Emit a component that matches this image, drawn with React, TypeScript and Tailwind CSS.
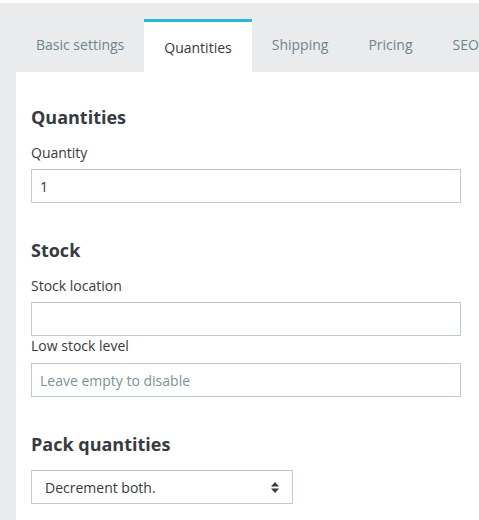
import React from 'react';

const tabs = ['Basic settings', 'Quantities', 'Shipping', 'Pricing', 'SEO'];

const inputCls =
  'block w-full h-[34px] border border-[#bbcdd2] bg-white px-[8px] text-[14px] text-[#363a41] placeholder-[#7a9299] outline-none';

const App: React.FC = () => {
  return (
    <div className="w-[479px] h-[520px] overflow-hidden bg-white font-['Open_Sans',sans-serif] text-[#363a41]">
      <div className="mt-[3px] h-[517px] bg-[#eaebed] pl-[16px]">
        <div className="flex pt-[16px] whitespace-nowrap">
          {tabs.map((t) =>
            t === 'Quantities' ? (
              <div key={t} className="h-[53px] border-t-[3px] border-[#25b9d7] bg-white px-[20px] pt-[16px] text-[14px] leading-[20px] text-[#363a41]">
                {t}
              </div>
            ) : (
              <div key={t} className="h-[53px] px-[20px] pt-[16px] text-[14px] leading-[20px] text-[#6c868e]">
                {t}
              </div>
            )
          )}
        </div>

        <div className="bg-white pl-[15px] pr-[18px] pt-[33px] h-[460px]">
          <h2 className="text-[18px] font-bold leading-[24px]">Quantities</h2>
          <label className="block mt-[14px] text-[14px] leading-[20px]">Quantity</label>
          <input className={`${inputCls} mt-[6px]`} defaultValue="1" />

          <h2 className="mt-[35px] text-[18px] font-bold leading-[24px]">Stock</h2>
          <label className="block mt-[14px] text-[14px] leading-[20px]">Stock location</label>
          <input className={`${inputCls} mt-[6px]`} />
          <label className="block text-[14px] leading-[20px]">Low stock level</label>
          <input className={`${inputCls} mt-[7px]`} placeholder="Leave empty to disable" />

          <h2 className="mt-[35px] text-[18px] font-bold leading-[24px]">Pack quantities</h2>
          <div className="mt-[14px] flex h-[34px] w-[262px] items-center justify-between border border-[#bbcdd2] pl-[13px] pr-[13px] text-[14px]">
            <span>Decrement both.</span>
            <svg width="8" height="11" viewBox="0 0 8 11" className="text-[#363a41]">
              <path d="M4 0 L8 4.5 L0 4.5 Z" fill="currentColor" />
              <path d="M0 6.5 L8 6.5 L4 11 Z" fill="currentColor" />
            </svg>
          </div>
        </div>
      </div>
    </div>
  );
};

export default App;
